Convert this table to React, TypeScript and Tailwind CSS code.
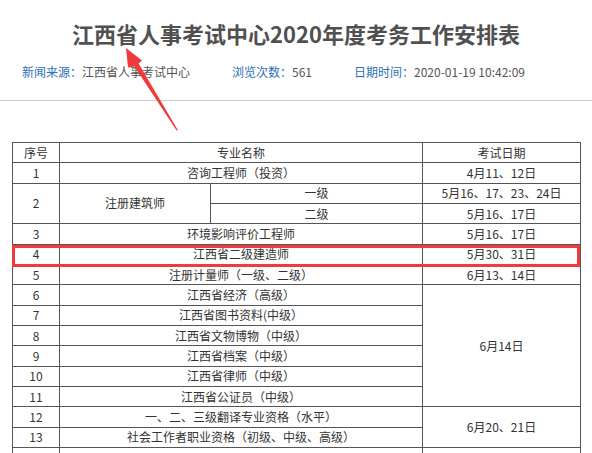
const rows: { no: string; name: string; date?: string; span?: number }[] = [
  { no: '1', name: '咨询工程师（投资）', date: '4月11、12日' },
]

const rest: { no: string; name: string; date?: string; span?: number }[] = [
  { no: '3', name: '环境影响评价工程师', date: '5月16、17日' },
  { no: '4', name: '江西省二级建造师', date: '5月30、31日' },
  { no: '5', name: '注册计量师（一级、二级）', date: '6月13、14日' },
  { no: '6', name: '江西省经济（高级）', date: '6月14日', span: 6 },
  { no: '7', name: '江西省图书资料(中级）' },
  { no: '8', name: '江西省文物博物（中级）' },
  { no: '9', name: '江西省档案（中级）' },
  { no: '10', name: '江西省律师（中级）' },
  { no: '11', name: '江西省公证员（中级）' },
  { no: '12', name: '一、二、三级翻译专业资格（水平）', date: '6月20、21日', span: 2 },
  { no: '13', name: '社会工作者职业资格（初级、中级、高级）' },
  { no: '\u00a0', name: '\u00a0', date: '\u00a0' },
]

const td = 'border border-[#555] h-[20.33px] p-0 text-center leading-[16px]'

function Meta({ label, value }: { label: string; value: string }) {
  return (
    <span>
      <span className="text-[#2c6fb7]">{label}</span>
      <span className="text-[#555]">{value}</span>
    </span>
  )
}

export default function App() {
  return (
    <div
      className="relative w-[592px] h-[453px] overflow-hidden bg-white"
      style={{ fontFamily: '"Microsoft YaHei", "Noto Sans CJK SC", sans-serif' }}
    >
      <h1 className="pt-[18px] text-center text-[22px] font-bold leading-[30px] text-[#505050]">
        江西省人事考试中心2020年度考务工作安排表
      </h1>

      <div className="mt-[14px] flex gap-[42px] pl-[22px] text-[12px] leading-[20px]">
        <Meta label="新闻来源：" value="江西省人事考试中心" />
        <Meta label="浏览次数：" value="561" />
        <Meta label="日期时间：" value="2020-01-19 10:42:09" />
      </div>

      <div className="mt-[18px] border-t border-[#ccc]" />

      <div className="relative mt-[41px] ml-[12px] w-[568px]">
        <table className="w-[568px] table-fixed border-collapse text-[12px] text-[#333]">
          <colgroup>
            <col className="w-[47px]" />
            <col className="w-[151px]" />
            <col className="w-[212px]" />
            <col className="w-[158px]" />
          </colgroup>
          <tbody>
            <tr>
              <td className={td}>序号</td>
              <td className={td} colSpan={2}>专业名称</td>
              <td className={td}>考试日期</td>
            </tr>
            {rows.map((r) => (
              <tr key={r.no}>
                <td className={td}>{r.no}</td>
                <td className={td} colSpan={2}>{r.name}</td>
                <td className={td}>{r.date}</td>
              </tr>
            ))}
            <tr>
              <td className={td} rowSpan={2}>2</td>
              <td className={td} rowSpan={2}>注册建筑师</td>
              <td className={td}>一级</td>
              <td className={td}>5月16、17、23、24日</td>
            </tr>
            <tr>
              <td className={td}>二级</td>
              <td className={td}>5月16、17日</td>
            </tr>
            {rest.map((r, i) => (
              <tr key={i}>
                <td className={td}>{r.no}</td>
                <td className={td} colSpan={2}>{r.name}</td>
                {r.date !== undefined && (
                  <td className={td} rowSpan={r.span ?? 1}>
                    {r.date}
                  </td>
                )}
              </tr>
            ))}
          </tbody>
        </table>

        {/* highlight on row 4 */}
        <div className="pointer-events-none absolute left-0 top-[103px] h-[22px] w-[568px] border-[3px] border-[#ef3b3b]" />
      </div>

      <svg className="pointer-events-none absolute left-0 top-0" width="592" height="453">
        <polygon
          points="126,48 142,60.5 138.6,63.5 177.8,130 176.6,130.6 134.4,66.4 128,67.5"
          fill="#ef3b3b"
        />
      </svg>
    </div>
  )
}
